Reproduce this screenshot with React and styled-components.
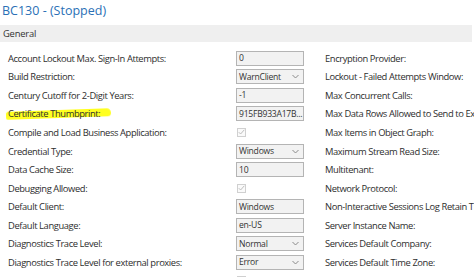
import React from "react";
import styled, { createGlobalStyle } from "styled-components";

const GlobalStyle = createGlobalStyle`
  html, body {
    margin: 0;
    padding: 0;
    background: #ffffff;
    overflow: hidden;
  }
  body {
    font-family: "Open Sans", "Noto Sans", sans-serif;
  }
`;

const Page = styled.div`
  width: 474px;
  height: 277px;
  overflow: hidden;
  background: #fff;
`;

const Title = styled.h1`
  margin: 0;
  padding: 1px 0 0 2px;
  height: 24px;
  box-sizing: border-box;
  font-size: 12.5px;
  font-weight: 400;
  color: #2a70b6;
  line-height: 20px;
  white-space: nowrap;
`;

const SectionBar = styled.div`
  width: 472px;
  height: 17px;
  margin-top: 1px;
  background: #efefef;
  padding-left: 3px;
  box-sizing: border-box;
  font-size: 9.4px;
  letter-spacing: -0.2px;
  line-height: 17px;
  color: #333;
`;

const Grid = styled.div`
  display: grid;
  grid-template-columns: 228px 68px auto;
  grid-auto-rows: 18.55px;
  padding: 7px 0 0 8px;
  align-items: center;
  white-space: nowrap;
`;

const Label = styled.div`
  position: relative;
  font-size: 9.4px;
  letter-spacing: -0.4px;
  color: #2e2e2e;
  line-height: 13px;
  padding-left: ${(p) => (p.$right ? "21px" : "0")};
`;

const LabelText = styled.span`
  position: relative;
`;

const Highlight = styled.span`
  position: absolute;
  left: -2px;
  top: 3px;
  width: 105px;
  height: 8px;
  background: #ffff20;
  border-radius: 3px 5px 4px 2px;
  transform: rotate(-2deg);
  filter: blur(0.4px);
`;

const Field = styled.div`
  box-sizing: border-box;
  height: 15px;
  width: 68px;
  border: 1px solid #b4b4b4;
  background: #f2f2f2;
  font-size: 8.6px;
  letter-spacing: -0.25px;
  line-height: 12px;
  padding-left: 2px;
  color: #333;
  display: flex;
  align-items: center;
  justify-content: space-between;
  overflow: hidden;
`;

const Chevron = styled.svg`
  width: 7px;
  height: 5px;
  margin-right: 4px;
  flex: none;
`;

const Check = styled.div`
  box-sizing: border-box;
  width: 9px;
  height: 9px;
  margin-left: 1px;
  border: 1px solid #d0d0d0;
  background: #fafafa;
  display: flex;
  align-items: center;
  justify-content: center;
`;

const left = [
  { label: "Account Lockout Max. Sign-In Attempts:", type: "text", value: "0" },
  { label: "Build Restriction:", type: "select", value: "WarnClient" },
  { label: "Century Cutoff for 2-Digit Years:", type: "text", value: "-1" },
  { label: "Certificate Thumbprint:", type: "text", value: "915FB933A17B...", mark: true },
  { label: "Compile and Load Business Application:", type: "check", checked: true },
  { label: "Credential Type:", type: "select", value: "Windows" },
  { label: "Data Cache Size:", type: "text", value: "10" },
  { label: "Debugging Allowed:", type: "check", checked: true },
  { label: "Default Client:", type: "text", value: "Windows" },
  { label: "Default Language:", type: "text", value: "en-US" },
  { label: "Diagnostics Trace Level:", type: "select", value: "Normal" },
  { label: "Diagnostics Trace Level for external proxies:", type: "select", value: "Error" },
  { label: "Disable Token-Signing Certificate Validation:", type: "check", checked: false },
];

const right = [
  "Encryption Provider:",
  "Lockout - Failed Attempts Window:",
  "Max Concurrent Calls:",
  "Max Data Rows Allowed to Send to Excel:",
  "Max Items in Object Graph:",
  "Maximum Stream Read Size:",
  "Multitenant:",
  "Network Protocol:",
  "Non-Interactive Sessions Log Retain Time:",
  "Server Instance Name:",
  "Services Default Company:",
  "Services Default Time Zone:",
  "Session Timeout:",
];

const Control = ({ row }) => {
  if (row.type === "check") {
    return (
      <Check>
        {row.checked && (
          <svg width="7" height="6" viewBox="0 0 7 6">
            <path d="M0.8 3.2 L2.6 5 L6.3 0.8" fill="none" stroke="#bdbdbd" strokeWidth="1" />
          </svg>
        )}
      </Check>
    );
  }
  return (
    <Field>
      <span>{row.value}</span>
      {row.type === "select" && (
        <Chevron viewBox="0 0 7 5">
          <path d="M0.5 1 L3.5 4 L6.5 1" fill="none" stroke="#8a8a8a" strokeWidth="1" />
        </Chevron>
      )}
    </Field>
  );
};

export default function App() {
  return (
    <Page>
      <GlobalStyle />
      <Title>BC130 - (Stopped)</Title>
      <SectionBar>General</SectionBar>
      <Grid>
        {left.map((row, i) => (
          <React.Fragment key={row.label}>
            <Label>
              {row.mark && <Highlight />}
              <LabelText>{row.label}</LabelText>
            </Label>
            <Control row={row} />
            <Label $right>{right[i]}</Label>
          </React.Fragment>
        ))}
      </Grid>
    </Page>
  );
}
